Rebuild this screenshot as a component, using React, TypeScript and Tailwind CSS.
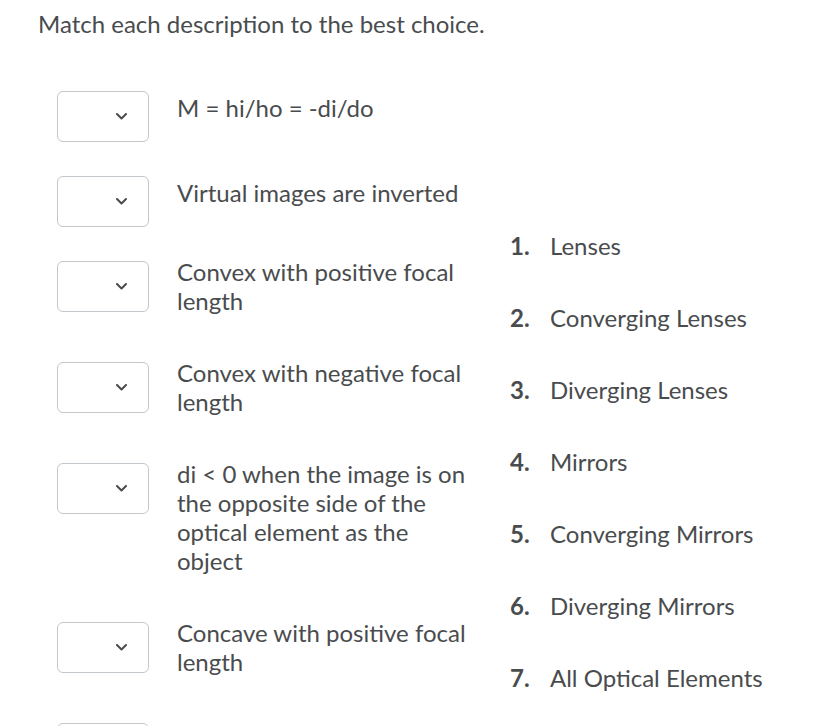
import React from 'react';

const descriptions = [
  { text: 'M = hi/ho = -di/do', wrap: false },
  { text: 'Virtual images are inverted', wrap: false },
  { text: 'Convex with positive focal length', wrap: true },
  { text: 'Convex with negative focal length', wrap: true },
  { text: 'di < 0 when the image is on the opposite side of the optical element as the object', wrap: true },
  { text: 'Concave with positive focal length', wrap: true },
  { text: '', wrap: false },
];

const choices = [
  'Lenses',
  'Converging Lenses',
  'Diverging Lenses',
  'Mirrors',
  'Converging Mirrors',
  'Diverging Mirrors',
  'All Optical Elements',
];

function SelectBox() {
  return (
    <div className="w-[92px] h-[51px] shrink-0 rounded-[6px] border border-[#c2c7cc] bg-white flex items-center justify-end pr-[21px]">
      <svg width="11" height="7" viewBox="0 0 11 7" fill="none">
        <path d="M1 1l4.5 4.5L10 1" stroke="#494c4e" strokeWidth="2" strokeLinecap="round" strokeLinejoin="round" />
      </svg>
    </div>
  );
}

export default function App() {
  return (
    <div className="w-[826px] h-[726px] overflow-hidden bg-white text-[#494c4e] text-[24px] leading-[29px] pl-[38px] pt-[9px]" style={{ fontFamily: 'Lato, "Open Sans", sans-serif' }}>
      <p>Match each description to the best choice.</p>

      <div className="flex mt-[53px]">
        <div className="ml-[19px] w-[453px] shrink-0">
          {descriptions.map((d, i) => (
            <div key={i} className="flex items-start mb-[34px]">
              <SelectBox />
              <div className={d.wrap ? 'ml-[28px] w-[298px] -mt-[4px] mb-[13px]' : 'ml-[28px] w-[298px] mt-[2px]'}>
                {d.text}
              </div>
            </div>
          ))}
        </div>

        <div className="mt-[140px]">
          {choices.map((c, i) => (
            <div key={i} className="flex mb-[43px]">
              <span className="w-[40px] font-bold text-[#494c4e]">{i + 1}.</span>
              <span>{c}</span>
            </div>
          ))}
        </div>
      </div>
    </div>
  );
}
